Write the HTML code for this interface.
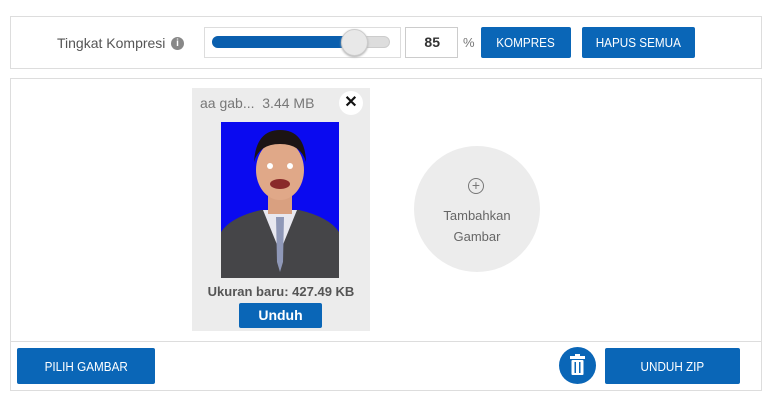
<!DOCTYPE html>
<html><head><style>
*{box-sizing:border-box;margin:0;padding:0}
body{width:768px;height:410px;background:#fff;font-family:"Liberation Sans",sans-serif;position:relative;overflow:hidden}
.a{position:absolute}
.btn{position:absolute;background:#0a66b7;color:#fff;font-size:13px;display:flex;align-items:center;justify-content:center;border-radius:2px}
.btn span{display:inline-block;transform:scaleX(.9)}
</style></head><body>
<div class="a" style="left:10px;top:16px;width:752px;height:53px;border:1px solid #ddd"></div>
<div class="a" style="left:57px;top:35px;font-size:14px;color:#555">Tingkat Kompresi</div>
<div class="a" style="left:171px;top:37px;width:13px;height:13px;border-radius:50%;background:#888;color:#fff;font-size:10px;font-weight:bold;text-align:center;line-height:13px">i</div>
<div class="a" style="left:204px;top:27px;width:197px;height:31px;border:1px solid #ddd"></div>
<div class="a" style="left:212px;top:36px;width:178px;height:12px;border-radius:6px;background:#ddd;border:1px solid #ccc"></div>
<div class="a" style="left:212px;top:36px;width:142px;height:12px;border-radius:6px;background:#0a5fae"></div>
<div class="a" style="left:341px;top:29px;width:27px;height:27px;border-radius:50%;background:#e8e8e8;border:1px solid #ccc;box-shadow:0 1px 2px #aaa"></div>
<div class="a" style="left:405px;top:27px;width:53px;height:31px;border:1px solid #ccc;font-size:14px;font-weight:bold;text-align:right;padding-right:17px;line-height:29px;color:#333">85</div>
<div class="a" style="left:463px;top:35px;font-size:13px;color:#777">%</div>
<div class="btn" style="left:481px;top:27px;width:90px;height:31px"><span>KOMPRES</span></div>
<div class="btn" style="left:582px;top:27px;width:113px;height:31px"><span>HAPUS SEMUA</span></div>

<div class="a" style="left:10px;top:78px;width:752px;height:313px;border:1px solid #ddd"></div>
<div class="a" style="left:11px;top:341px;width:750px;height:1px;background:#ddd"></div>
<div class="a" style="left:192px;top:88px;width:178px;height:243px;background:#ececec"></div>
<div class="a" style="left:200px;top:95px;font-size:14px;color:#777">aa gab...&nbsp;&nbsp;3.44 MB</div>
<div class="a" style="left:339px;top:91px;width:24px;height:24px;border-radius:50%;background:#fff;font-size:16px;font-weight:bold;text-align:center;line-height:24px;color:#111">✕</div>
<svg class="a" style="left:221px;top:122px" width="118" height="156" viewBox="0 0 118 156">
<rect width="118" height="156" fill="#0a0af0"/>
<path d="M0 156 L0 110 Q10 95 40 88 L78 88 Q108 95 118 110 L118 156Z" fill="#454548"/>
<path d="M42 88 L59 130 L76 88Z" fill="#e8e8f0"/>
<path d="M55 95 L63 95 L62 140 L59 150 L56 140Z" fill="#8f98b8"/>
<rect x="47" y="70" width="24" height="22" fill="#d9a080"/>
<ellipse cx="59" cy="48" rx="24" ry="30" fill="#e0a888"/>
<path d="M33 40 Q35 8 59 8 Q84 8 85 40 Q80 22 59 22 Q38 22 33 40Z" fill="#1c1414"/>
<ellipse cx="59" cy="62" rx="10" ry="5" fill="#8a2a2a"/>
<circle cx="49" cy="44" r="3" fill="#fff"/><circle cx="69" cy="44" r="3" fill="#fff"/>
</svg>
<div class="a" style="left:192px;top:284px;width:178px;text-align:center;font-size:13px;font-weight:bold;color:#555">Ukuran baru: 427.49 KB</div>
<div class="a" style="left:239px;top:303px;width:83px;height:25px;background:#0a66b7;border-radius:2px;color:#fff;font-size:14px;font-weight:bold;text-align:center;line-height:25px">Unduh</div>

<div class="a" style="left:414px;top:146px;width:126px;height:126px;border-radius:50%;background:#ececec"></div>
<div class="a" style="left:468px;top:178px;width:16px;height:16px;border:1.5px solid #777;border-radius:50%;color:#777;font-size:14px;line-height:12px;text-align:center">+</div>
<div class="a" style="left:414px;top:205px;width:126px;text-align:center;font-size:13px;color:#666;line-height:21px">Tambahkan<br>Gambar</div>

<div class="btn" style="left:17px;top:348px;width:138px;height:36px"><span>PILIH GAMBAR</span></div>
<div class="a" style="left:559px;top:347px;width:37px;height:37px;border-radius:50%;background:#0a66b7"></div>
<svg class="a" style="left:569px;top:354px" width="17" height="22" viewBox="0 0 17 22"><rect x="1" y="2" width="15" height="3" fill="#fff"/><rect x="6" y="0" width="5" height="2" fill="#fff"/><rect x="2.5" y="6" width="12" height="15" rx="1" fill="#fff"/><rect x="5.5" y="8" width="1.5" height="11" fill="#0a66b7"/><rect x="10" y="8" width="1.5" height="11" fill="#0a66b7"/></svg>
<div class="btn" style="left:605px;top:348px;width:135px;height:36px"><span>UNDUH ZIP</span></div>
</body></html>
